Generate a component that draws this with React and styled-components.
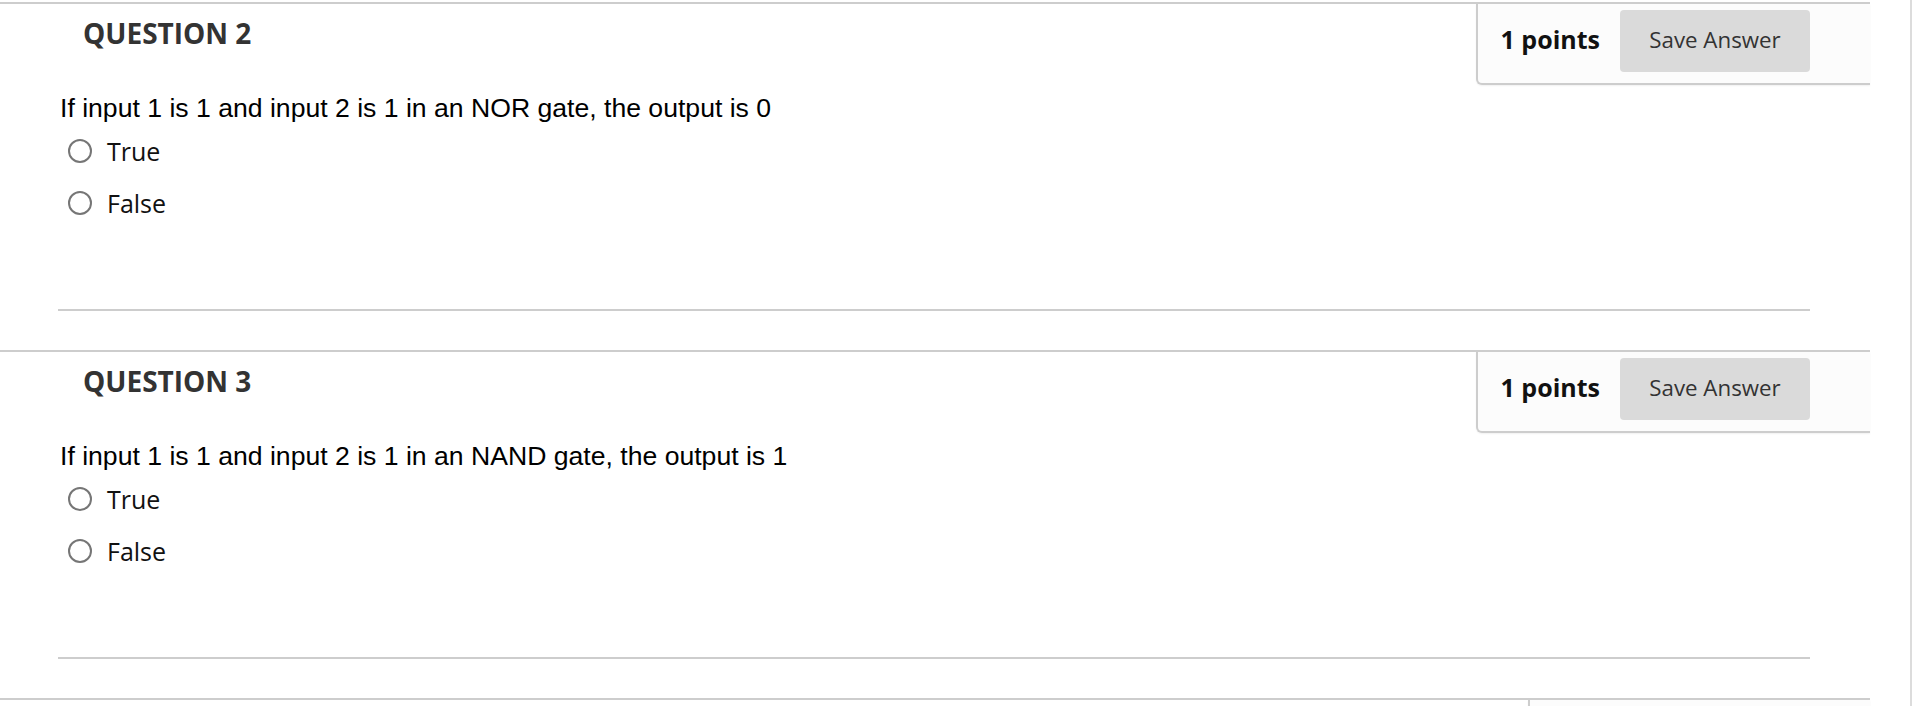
import React from "react";
import styled, { createGlobalStyle } from "styled-components";

const Global = createGlobalStyle`
  html, body { margin: 0; padding: 0; background: #ffffff; }
  body { font-family: "Open Sans", "Liberation Sans", Arial, sans-serif; }
`;

const Page = styled.div`
  display: flex;
  align-items: stretch;
  padding-top: 2px;
  height: 706px;
  box-sizing: border-box;
  overflow: hidden;
`;

const Main = styled.div`
  flex: 0 0 1870px;
  display: flex;
  flex-direction: column;
`;

const Gutter = styled.div`
  flex: 1;
  display: flex;
  justify-content: flex-end;
  padding-right: 2px;
  margin-top: -2px;
`;

const TrackEdge = styled.div`
  width: 2px;
  background: #dcdcdc;
`;

const Question = styled.section`
  border-top: 2px solid #cdcdcd;
  height: 346px;
  flex: 0 0 auto;
  display: flex;
  flex-direction: column;
`;

const HeaderRow = styled.div`
  display: flex;
  align-items: flex-start;
  justify-content: space-between;
`;

const Title = styled.h3`
  margin: 12px 0 0 83px;
  font-family: "Open Sans", sans-serif;
  font-weight: 700;
  font-size: 28px;
  line-height: 34px;
  color: #333333;
`;

const PointsBox = styled.div`
  display: flex;
  align-items: center;
  gap: 20px;
  padding: 6px 60px 11px 23px;
  margin-left: auto;
  width: ${(p) => (p.$width ? `${p.$width}px` : "auto")};
  min-height: ${(p) => (p.$width ? "62px" : "0")};
  box-sizing: content-box;
  border-left: 2px solid #cdcdcd;
  border-bottom: 2px solid #cdcdcd;
  border-bottom-left-radius: 6px;
  background: #fcfcfc;
  box-shadow: 0 1px 2px rgba(0, 0, 0, 0.06);
`;

const Points = styled.span`
  font-family: "Open Sans", sans-serif;
  font-weight: 700;
  font-size: 25px;
  line-height: 30px;
  color: #111111;
  margin-bottom: 5px;
`;

const SaveButton = styled.button`
  width: 190px;
  height: 62px;
  border: none;
  border-radius: 4px;
  background: #dadada;
  color: #333333;
  font-family: "Open Sans", sans-serif;
  font-size: 22.3px;
  padding: 0 0 3px;
  cursor: pointer;
`;

const Prompt = styled.p`
  margin: 8px 0 0 60px;
  font-family: "Liberation Sans", Arial, sans-serif;
  font-size: 26.6px;
  line-height: 30px;
  color: #000000;
`;

const Options = styled.div`
  display: flex;
  flex-direction: column;
  gap: 22px;
  margin: 13px 0 0 68px;
`;

const Option = styled.label`
  display: flex;
  align-items: center;
  gap: 15px;
  height: 30px;
  font-family: "Open Sans", sans-serif;
  font-size: 25px;
  color: #111111;
`;

const Radio = styled.span`
  width: 20px;
  height: 20px;
  border: 2px solid #767676;
  border-radius: 50%;
  background: #ffffff;
  flex: 0 0 auto;
`;

const Divider = styled.hr`
  margin: auto 60px 39px 58px;
  width: 1752px;
  border: none;
  border-top: 2px solid #cdcdcd;
  height: 0;
`;

const questions = [
  { n: 2, text: "If input 1 is 1 and input 2 is 1 in an NOR gate, the output is 0" },
  { n: 3, text: "If input 1 is 1 and input 2 is 1 in an NAND gate, the output is 1" },
];

function QuestionBlock({ n, text }) {
  return (
    <Question>
      <HeaderRow>
        <Title>QUESTION {n}</Title>
        <PointsBox>
          <Points>1 points</Points>
          <SaveButton type="button">Save Answer</SaveButton>
        </PointsBox>
      </HeaderRow>
      <Prompt>{text}</Prompt>
      <Options>
        <Option>
          <Radio />
          True
        </Option>
        <Option>
          <Radio />
          False
        </Option>
      </Options>
      <Divider />
    </Question>
  );
}

function NextQuestionEdge() {
  return (
    <Question>
      <HeaderRow>
        <PointsBox $width={257} />
      </HeaderRow>
    </Question>
  );
}

export default function App() {
  return (
    <>
      <Global />
      <Page>
        <Main>
          {questions.map((q) => (
            <QuestionBlock key={q.n} n={q.n} text={q.text} />
          ))}
          <NextQuestionEdge />
        </Main>
        <Gutter>
          <TrackEdge />
        </Gutter>
      </Page>
    </>
  );
}
